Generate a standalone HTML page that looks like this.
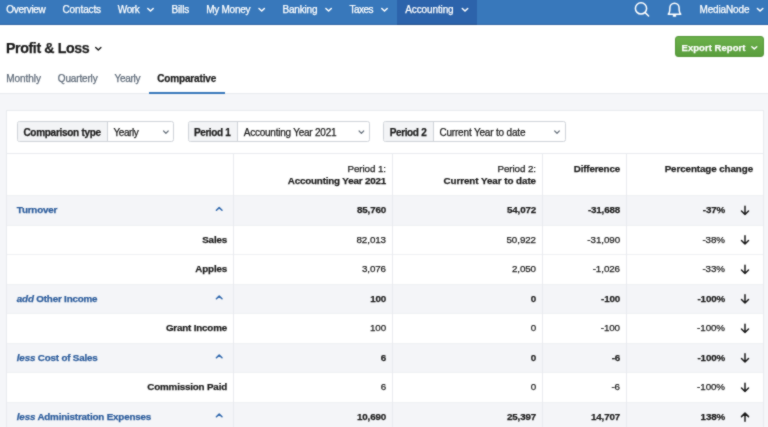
<!DOCTYPE html>
<html><head><meta charset="utf-8">
<style>
*{box-sizing:border-box;margin:0;padding:0}
html,body{width:768px;height:427px;overflow:hidden;background:#f5f6f9;font-family:"Liberation Sans",Arial,sans-serif;color:#1d1d1d}
svg{position:absolute;overflow:visible}
.nav{position:absolute;left:0;top:0;width:768px;height:25px;background:#3878bb;border-bottom:1px solid #2f66a6;color:#fff;font-size:10px}
.nav span{position:absolute;top:3.8px;line-height:12px;white-space:nowrap}
.nav .act{position:absolute;left:397px;top:-20px;width:80.3px;height:45px;background:#2c63ab;border-bottom:1px solid #234f8c}
.head{position:absolute;left:0;top:25px;width:768px;height:69px;background:#fff;border-bottom:1px solid #e9ebef}
.title{position:absolute;left:6px;top:40.4px;font-size:14.2px;letter-spacing:-.377px;font-weight:bold;line-height:16px;color:#1c1c1c;white-space:nowrap}
.tabs span{position:absolute;top:73.1px;font-size:10px;line-height:12px;color:#5f6b79;white-space:nowrap}
.tabs .on{color:#1c1c1c;font-weight:bold}
.uline{position:absolute;left:149.3px;top:92px;width:75.7px;height:2px;background:#3878bb}
.btn{position:absolute;left:675.2px;top:36.25px;width:88.8px;height:20.75px;background:linear-gradient(#6bb04a,#5a9e3e);border:1px solid #559739;border-radius:3px;color:#fff;font-weight:bold;font-size:9.5px;letter-spacing:.04px;line-height:22.3px;padding-left:5.4px;white-space:nowrap}
.card{position:absolute;left:6px;top:110px;width:758px;height:330px;background:#fff;border:1px solid #e9ebef}
.sel{position:absolute;top:121px;height:20.5px;border:1px solid #cfd3d9;border-radius:2.5px;background:#fff;font-size:10px;line-height:21px;overflow:hidden}
.sel b{position:absolute;left:0;top:0;height:19px;background:#f3f4f6;border-right:1px solid #cfd3d9;padding:0 6.4px 0 5.4px;font-weight:bold;white-space:nowrap}
.sel i{position:absolute;top:0;font-style:normal;white-space:nowrap}
table{position:absolute;left:7px;top:153px;width:756px;border-collapse:collapse;font-size:9.8px;letter-spacing:-.08px}
td{height:29.5px;border-top:1px solid #eff1f4;text-align:right;padding:0 6px .6px;vertical-align:middle;white-space:nowrap}
b,tr.g td,td.n{font-weight:bold;letter-spacing:-.17px}
tr.h td{height:42px;line-height:12.3px;border-top:1px solid #e9ebef;padding-top:2px}
td+td{border-left:1px solid #e9ebef}
tr.g td{background:#f4f5f8}
tr.g td:first-child{text-align:left;color:#2d5d9c;padding-left:9.8px}
td.p{padding-right:38px}
#w{-webkit-text-stroke:.25px;position:absolute;left:-20px;top:-20px;width:808px;height:467px;background:#f5f6f9;filter:url(#sf)}
#in{position:absolute;left:20px;top:20px;width:768px;height:427px}
.navbg{position:absolute;left:-20px;top:-20px;width:808px;height:45px;background:#3878bb;border-bottom:1px solid #2f66a6}
.headbg{position:absolute;left:-20px;top:25px;width:808px;height:69px;background:#fff;border-bottom:1px solid #e9ebef}
</style></head><body><svg width="0" height="0" style="position:absolute"><filter id="sf" x="0" y="0" width="100%" height="100%" color-interpolation-filters="sRGB"><feConvolveMatrix order="3" kernelMatrix="1 2 1 2 14 2 1 2 1" divisor="26" edgeMode="duplicate" preserveAlpha="true"/></filter></svg><div id="w"><div id="in"><div class="navbg"></div><div class="headbg"></div>
<div class="nav">
<div class="act"></div>
<span style="left:6.2px;letter-spacing:-.29px">Overview</span>
<span style="left:62.5px;letter-spacing:-.12px">Contacts</span>
<span style="left:117.8px;letter-spacing:-.39px">Work</span>
<span style="left:171.6px;letter-spacing:-.19px">Bills</span>
<span style="left:206.2px;letter-spacing:-.26px">My Money</span>
<span style="left:282.5px;letter-spacing:-.2px">Banking</span>
<span style="left:349.4px;letter-spacing:-.5px">Taxes</span>
<span style="left:405.2px;letter-spacing:-.11px">Accounting</span>
<span style="left:699.5px;letter-spacing:-.14px">MediaNode</span>
</div>
<svg width="768" height="25" style="left:0;top:0" fill="none" stroke="#fff" stroke-width="1.5" stroke-linecap="round" stroke-linejoin="round">
<path d="M147.800 8.500l2.700 2.500 2.700-2.500"/>
<path d="M259 8.500l2.700 2.500 2.700-2.500"/>
<path d="M325.900 8.500l2.700 2.500 2.700-2.500"/>
<path d="M381.800 8.500l2.700 2.500 2.700-2.500"/>
<path d="M462.300 8.500l2.700 2.500 2.700-2.500"/>
<path d="M757.400 8.500l2.700 2.500 2.700-2.500"/>
<g stroke-width="1.500"><circle cx="641" cy="8.400" r="5.600"/><path d="M645.200 12.600l3.400 3.400"/>
<path d="M668.300 14.200c1.600-1.200 1.600-2.600 1.600-6.400a4.600 4.600 0 0 1 9.200 0c0 3.800 0 5.200 1.600 6.400z"/><path d="M673.500 15.900h2" stroke-width="1.600"/></g>
</svg>
<div class="head"></div>
<div class="title">Profit &amp; Loss</div>
<svg width="10" height="6" style="left:94px;top:45px" fill="none" stroke="#1c1c1c" stroke-width="1.400" stroke-linecap="round" stroke-linejoin="round"><path d="M1.700 2.400l2.600 2.500 2.600-2.500"/></svg>
<div class="tabs">
<span style="left:6.2px;letter-spacing:-.04px">Monthly</span>
<span style="left:57.800px;letter-spacing:-.16px">Quarterly</span>
<span style="left:114.400px;letter-spacing:-.26px">Yearly</span>
<span class="on" style="left:157.200px;letter-spacing:-.144px">Comparative</span>
</div>
<div class="uline"></div>
<div class="btn">Export Report</div>
<svg width="10" height="6" style="left:750px;top:44px" fill="none" stroke="#fff" stroke-width="1.400" stroke-linecap="round" stroke-linejoin="round"><path d="M1.800 2.800l2.500 2.100 2.500-2.100"/></svg>
<div class="card"></div>
<div class="sel" style="left:17px;width:157px"><b style="letter-spacing:-.28px">Comparison type</b><i style="left:95.400px;letter-spacing:-.4px">Yearly</i></div>
<div class="sel" style="left:187.600px;width:182.400px"><b style="letter-spacing:-.42px;word-spacing:.4px">Period 1</b><i style="left:55.200px;letter-spacing:-.24px">Accounting Year 2021</i></div>
<div class="sel" style="left:383.400px;width:182.400px"><b style="letter-spacing:-.42px;word-spacing:.4px">Period 2</b><i style="left:55px;letter-spacing:-.18px">Current Year to date</i></div>
<svg width="768" height="20" style="left:0;top:122px" fill="none" stroke="#68727d" stroke-width="1.200" stroke-linecap="round" stroke-linejoin="round">
<path d="M163.600 9l2.300 2.300 2.300-2.300"/><path d="M359.100 9l2.300 2.300 2.300-2.300"/><path d="M554.700 9l2.300 2.300 2.300-2.300"/></svg>
<table>
<colgroup><col style="width:226.500px"><col style="width:159px"><col style="width:150px"><col style="width:84px"><col style="width:136.500px"></colgroup>
<tr class="h"><td></td><td>Period 1:<br><b>Accounting Year 2021</b></td><td>Period 2:<br><b style="letter-spacing:-.045px">Current Year to date</b></td><td style="vertical-align:top;padding-top:8.7px"><b>Difference</b></td><td style="vertical-align:top;padding-top:8.7px;padding-right:10px"><b style="letter-spacing:-.088px">Percentage change</b></td></tr>
<tr class="g"><td>Turnover</td><td>85,760</td><td>54,072</td><td>-31,688</td><td class="p">-37%</td></tr>
<tr><td class="n">Sales</td><td>82,013</td><td>50,922</td><td>-31,090</td><td class="p">-38%</td></tr>
<tr><td class="n">Apples</td><td>3,076</td><td>2,050</td><td>-1,026</td><td class="p">-33%</td></tr>
<tr class="g"><td><i>add</i> Other Income</td><td>100</td><td>0</td><td>-100</td><td class="p">-100%</td></tr>
<tr><td class="n">Grant Income</td><td>100</td><td>0</td><td>-100</td><td class="p">-100%</td></tr>
<tr class="g"><td><i>less</i> Cost of Sales</td><td>6</td><td>0</td><td>-6</td><td class="p">-100%</td></tr>
<tr><td class="n">Commission Paid</td><td>6</td><td>0</td><td>-6</td><td class="p">-100%</td></tr>
<tr class="g"><td><i>less</i> Administration Expenses</td><td>10,690</td><td>25,397</td><td>14,707</td><td class="p">138%</td></tr>
</table>
<svg width="768" height="427" style="left:0;top:0" fill="none" stroke-linecap="round" stroke-linejoin="round">
<g stroke="#336aae" stroke-width="1.500">
<path id="u" d="M216.400 210.300l2.800-2.700 2.800 2.700"/>
<use href="#u" y="88.500"/><use href="#u" y="147.500"/><use href="#u" y="206.500"/>
</g>
<g stroke="#1c1c1c" stroke-width="1.500">
<path id="d" d="M745 206.300v8.100M741.500 211l3.500 3.500 3.500-3.500"/>
<use href="#d" y="29.500"/><use href="#d" y="59"/><use href="#d" y="88.500"/><use href="#d" y="118"/><use href="#d" y="147.500"/><use href="#d" y="177"/>
<path d="M745 421.300v-8.100M741.500 416.600l3.500-3.500 3.500 3.500"/>
</g>
</svg>
</div></div></body></html>
